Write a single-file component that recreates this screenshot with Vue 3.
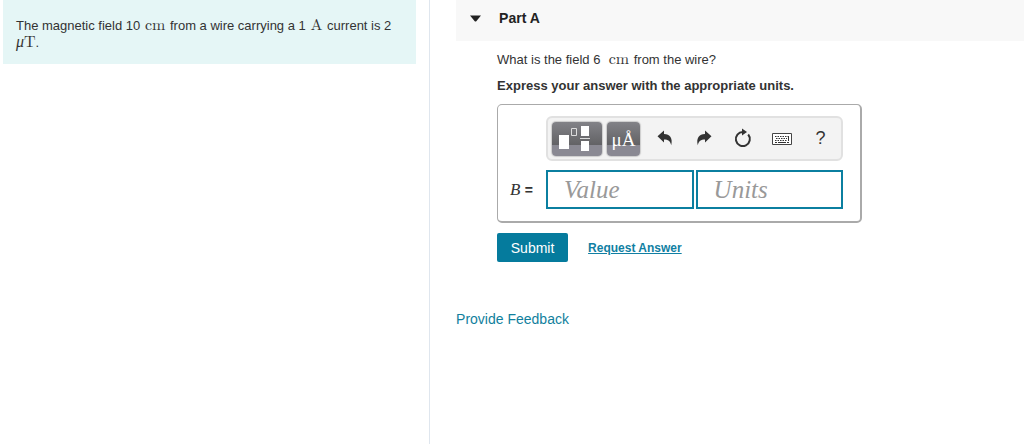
<script setup>
import { ref } from 'vue'

const value = ref('')
const units = ref('')
const open = ref(true)
</script>

<template>
  <div class="page">
    <aside class="intro">
      <p class="problem">
        The magnetic field 10 <span class="math">cm</span> from a wire carrying a 1
        <span class="math">A</span> current is 2 <span class="math unit"><i>μ</i>T</span>.
      </p>
    </aside>

    <main class="work">
      <header class="part">
        <button class="toggle" type="button" aria-label="Toggle Part A" :aria-expanded="open" @click="open = !open">
          <svg width="11" height="7" viewBox="0 0 11 7"><path d="M0 .5h11L6.5 6q-1 1-2 0z" fill="#222" /></svg>
        </button>
        <h2>Part A</h2>
      </header>

      <form v-show="open" class="question" @submit.prevent>
        <p class="ask">What is the field 6&nbsp; <span class="math">cm</span> from the wire?</p>
        <p class="hint">Express your answer with the appropriate units.</p>

        <div class="answer">
          <div class="toolbar" role="toolbar" aria-label="Answer tools">
            <button class="dark templates" type="button" aria-label="Templates">
              <svg width="50" height="34" viewBox="0 0 50 34">
                <path d="M7 13h10v14H7zM29 4h8v10h-8zM29 19h8v10h-8z" fill="#fff" />
                <path d="M28 16.5h10" stroke="#ddd" stroke-width="1" />
                <path d="M19.500 6.500h5v7h-5z" fill="none" stroke="#ddd" stroke-width="1" />
              </svg>
            </button>
            <button class="dark symbols" type="button" aria-label="Symbols">μÅ</button>
            <button class="tool" type="button" aria-label="Undo">
              <svg width="16" height="16" viewBox="0 0 16 16"><path d="M.5 6.200 7 .5v3.400c6 .2 9 4.300 7.200 11.300-1-4-3-5.500-7.200-5.600v2.800z" fill="#333" /></svg>
            </button>
            <button class="tool" type="button" aria-label="Redo">
              <svg width="16" height="16" viewBox="0 0 16 16"><path d="M15.500 6.200 9 .5v3.400C3 4.100 0 8.200 1.800 15.200c1-4 3-5.500 7.200-5.600v2.800z" fill="#333" /></svg>
            </button>
            <button class="tool" type="button" aria-label="Reset">
              <svg width="18" height="20" viewBox="0 0 18 20">
                <path d="M14.200 6.500A7 7 0 1 1 9 4" fill="none" stroke="#333" stroke-width="2" />
                <path d="M8 .5 13 4 8 7.500z" fill="#333" />
              </svg>
            </button>
            <button class="tool" type="button" aria-label="Keyboard shortcuts">
              <svg class="keyboard" width="20" height="13" viewBox="0 0 20 13">
                <path d="M.5.5h19v11H.5z" fill="#fff" stroke="#444" />
                <path d="M3 3.500h14M4 5.500h11M3 7.500h12" stroke="#333" stroke-dasharray="1.500 1" />
                <path d="M3 9.500h2m1 0h8m1 0h2M16.500 4v4" stroke="#333" />
              </svg>
            </button>
            <button class="tool help" type="button" aria-label="Help">?</button>
          </div>
          <label class="symbol" for="value"><i>B</i> <b>=</b></label>
          <div class="fields">
            <input id="value" v-model="value" type="text" placeholder="Value" />
            <input v-model="units" type="text" placeholder="Units" aria-label="Units" />
          </div>
        </div>

        <div class="actions">
          <button class="submit" type="submit">Submit</button>
          <a class="request" href="#">Request Answer</a>
        </div>
      </form>

      <a class="feedback" href="#">Provide Feedback</a>
    </main>
  </div>
</template>

<style>
body {
  margin: 0;
  background: #fff;
}
</style>

<style scoped>
.page {
  display: grid;
  grid-template-columns: 42% 1fr;
  min-height: 100vh;
  font: 14px/16px "Liberation Sans", Arial, sans-serif;
  color: #333;
}
* {
  box-sizing: border-box;
}
p,
h2 {
  margin: 0;
}
button {
  padding: 0;
  border: 0;
  background: none;
  font: inherit;
  color: inherit;
  cursor: pointer;
}
svg {
  display: block;
}
.intro {
  padding: 0 13px 0 3px;
  border-right: 1px solid #dfe6ee;
}
.problem {
  padding: 17px 13px 13px;
  background: #e5f6f6;
}
.problem,
.ask,
.hint {
  font-size: 13px;
}
.problem {
  line-height: 17px;
}
.math {
  margin: 0 1px;
  font-family: "Latin Modern Roman", "Liberation Serif", serif;
  font-size: 16px;
  line-height: 0;
}
.unit {
  margin: 0;
}
.work {
  padding-left: 26px;
}
.part {
  display: flex;
  align-items: center;
  height: 41px;
  padding: 0 0 5px 14px;
  background: #f8f8f8;
}
.toggle {
  width: 11px;
  margin-right: 18px;
}
h2 {
  font-size: 14px;
  line-height: 16px;
  color: #222;
}
.question {
  padding: 11px 0 0 41px;
}
.hint {
  margin: 10px 0;
  font-weight: bold;
}
.answer {
  display: grid;
  grid-template-columns: 36px 297px;
  gap: 9px 0;
  width: 365px;
  padding: 11px 17px 12px 12px;
  border: 1px solid #aaa;
  border-bottom-width: 2px;
  border-right-width: 2px;
  border-radius: 5px;
}
.toolbar {
  grid-column: 2;
  display: flex;
  align-items: center;
  height: 45px;
  padding: 0 4px;
  border: 2px solid #e1e1e1;
  border-radius: 6px;
  background: #f3f3f3;
}
.dark {
  flex: none;
  height: 34px;
  margin-right: 5px;
  border-radius: 4px;
  background: linear-gradient(#828287, #626265 68%, #8a8993 68%, #8a8993);
  box-shadow: 0 0 1px 1px #ccc;
  color: #fff;
}
.templates {
  width: 50px;
}
.symbols {
  width: 33px;
  padding-top: 2px;
  font: 19px/32px "Liberation Serif", serif;
}
.tool {
  display: grid;
  place-items: center;
  width: 39px;
  height: 38px;
  padding-bottom: 2px;
  flex: none;
  color: #333;
}
.keyboard {
  margin-top: 4px;
}
.help {
  font-size: 18px;
}
.symbol {
  align-self: center;
  font: 17px/20px "Liberation Serif", serif;
}
.symbol b {
  font: bold 14px/20px "Liberation Sans", Arial, sans-serif;
}
.fields {
  display: grid;
  grid-template-columns: 1fr 1fr;
  gap: 2px;
}
input {
  width: 100%;
  height: 39px;
  padding: 0 16px;
  border: 2px solid #0b7fa0;
  border-radius: 0;
  background: #fff;
  font: italic 25px/34px "Liberation Serif", serif;
  color: #333;
}
input::placeholder {
  color: #999;
  opacity: 1;
}
.actions {
  display: flex;
  align-items: center;
  gap: 20px;
  margin-top: 10px;
}
.submit {
  width: 71px;
  height: 29px;
  border-radius: 2px;
  background: #057b9d;
  color: #fff;
}
.request {
  font-size: 12px;
  font-weight: bold;
  color: #117fa3;
}
.feedback {
  display: inline-block;
  margin-top: 49px;
  color: #117f9d;
  text-decoration: none;
}
</style>
